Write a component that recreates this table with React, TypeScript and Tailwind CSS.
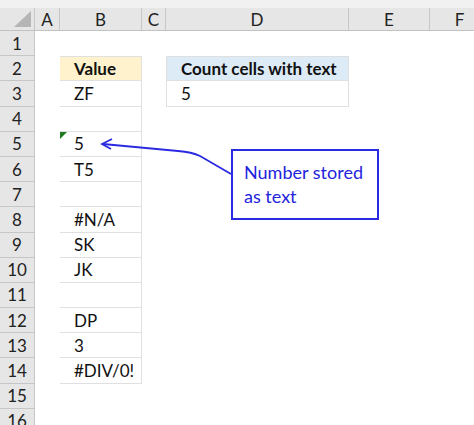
import React from "react";

const cols = [
  { key: "A", w: "w-[25px]" },
  { key: "B", w: "w-[82px]" },
  { key: "C", w: "w-[24px]" },
  { key: "D", w: "w-[183px]" },
  { key: "E", w: "w-[81px]" },
  { key: "F", w: "w-[60px]" },
];

const values: Record<number, string> = {
  3: "ZF",
  5: "5",
  6: "T5",
  8: "#N/A",
  9: "SK",
  10: "JK",
  12: "DP",
  13: "3",
  14: "#DIV/0!",
};

function Row({ n }: { n: number }) {
  const inB = n >= 2 && n <= 14;
  const inD = n === 2 || n === 3;
  return (
    <div className="flex h-[25.2px]">
      <div className="w-[35px] shrink-0 bg-[#e6e6e6] border-r border-b border-[#c6c6c6] flex items-center justify-center text-[#222]">
        {n}
      </div>
      <div className="w-[25px] shrink-0" />
      <div
        className={`w-[82px] shrink-0 relative flex items-center pl-[14px] ${
          inB ? "border-b border-r border-[#e0e0e0]" : ""
        } ${n === 2 ? "bg-[#fff2cc] font-bold border-t" : ""}`}
      >
        {n === 5 && (
          <span className="absolute left-0 top-0 w-0 h-0 border-t-[7px] border-r-[7px] border-t-[#1e7a1e] border-r-transparent" />
        )}
        {n === 2 ? "Value" : values[n] ?? ""}
      </div>
      <div className="w-[24px] shrink-0" />
      <div
        className={`w-[183px] shrink-0 flex items-center pl-[14px] ${
          inD ? "border-b border-r border-l border-[#e0e0e0]" : ""
        } ${n === 2 ? "bg-[#ddebf7] font-bold border-t" : ""}`}
      >
        {n === 2 ? "Count cells with text" : n === 3 ? "5" : ""}
      </div>
    </div>
  );
}

export default function App() {
  const rows = Array.from({ length: 16 }, (_, i) => i + 1);
  return (
    <div
      className="relative w-[474px] h-[425px] overflow-hidden bg-white text-[17px] text-[#111] leading-none"
      style={{ fontFamily: "Lato, 'Noto Sans', sans-serif" }}
    >
      {/* column headers */}
      <div className="flex flex-col">
        <div className="h-[8px] bg-[#f1f1f1]" />
        <div className="flex h-[23px] bg-[#e6e6e6] border-b border-[#c2c2c2]">
          <div className="w-[35px] shrink-0 border-r border-[#c6c6c6] relative">
            <span className="absolute right-[3px] bottom-[3px] w-0 h-0 border-b-[16px] border-l-[17px] border-b-[#b5b5b5] border-l-transparent" />
          </div>
          {cols.map((c) => (
            <div
              key={c.key}
              className={`${c.w} shrink-0 border-r border-[#c6c6c6] flex items-center justify-center text-[#222]`}
            >
              {c.key}
            </div>
          ))}
        </div>
      </div>

      {rows.map((n) => (
        <Row key={n} n={n} />
      ))}

      {/* callout */}
      <div className="absolute left-[231px] top-[149px] w-[148px] h-[71px] border-2 border-[#2a2ae0] bg-white px-[11px] pt-[9px] text-[#2323dd] text-[18px] leading-[24px]">
        Number stored
        <br />
        as text
      </div>
      <svg className="absolute left-0 top-0" width="474" height="425" viewBox="0 0 474 425">
        <path
          d="M231 174 L200 156 Q192 152 178 151 L103 144"
          fill="none"
          stroke="#2a2ae0"
          strokeWidth="1.8"
        />
        <path d="M112 139 L102 144 L111 149" fill="none" stroke="#2a2ae0" strokeWidth="1.8" />
      </svg>
    </div>
  );
}
